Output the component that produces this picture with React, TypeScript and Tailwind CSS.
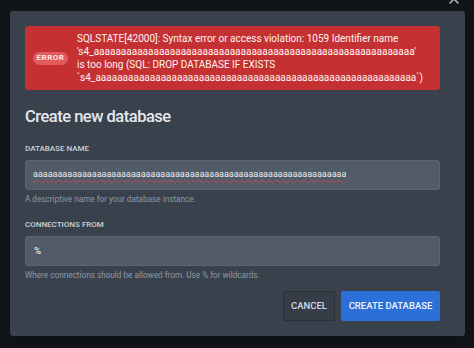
import { X } from "lucide-react";

const A = "a".repeat(64);
const E = "a".repeat(59);

export default function App() {
    return (
        <div className="relative w-full h-[348px] bg-[#111418] pt-[11px] pl-[10px] overflow-hidden" style={{ fontFamily: "Roboto, 'Noto Sans', sans-serif" }}>
            <X size={16} strokeWidth={2.5} className="absolute right-[12px] top-[-9px] text-[#aab2bd]" />

            <div className="w-[455px] h-[325px] bg-[#39414c] rounded-[3px] pt-[15px] pl-[15px] pr-[25px] pb-[15px] flex flex-col shadow-lg">
                {/* error */}
                <div className="h-[64px] bg-[#c53032] rounded-[3px] flex items-center pl-[8px] overflow-hidden">
                    <span className="shrink-0 w-[35px] h-[13px] rounded-full bg-[#e15a5c] text-[#fde8e8] text-[8px] font-bold tracking-[0.06em] flex items-center justify-center">
                        ERROR
                    </span>
                    <p className="ml-[9px] text-[10px] leading-[13px] text-[#fff3f3] whitespace-pre">
                        {"SQLSTATE[42000]: Syntax error or access violation: 1059 Identifier name\n"}
                        {`'s4_${E}'\n`}
                        {"is too long (SQL: DROP DATABASE IF EXISTS\n"}
                        {`\`s4_${E}\`)`}
                    </p>
                </div>

                <h2 className="mt-[16px] text-[16.5px] leading-[22px] font-medium tracking-[-0.03em] text-[#e5e8ec]">Create new database</h2>

                <label className="mt-[15px] text-[8px] leading-[12px] font-medium text-[#cbd2da]">DATABASE NAME</label>
                <div className="mt-[5px] h-[30px] bg-[#525c68] border border-[#5b6672] rounded-[3px] flex items-center pl-[7px]">
                    <span className="text-[9px] text-[#e8ebef] underline decoration-wavy decoration-[#c04a4a] decoration-[0.5px] underline-offset-2">{A}</span>
                </div>
                <p className="mt-[3px] text-[8.2px] leading-[12px] text-[#8f99a5]">A descriptive name for your database instance.</p>

                <label className="mt-[14px] text-[8px] leading-[12px] font-medium text-[#cbd2da]">CONNECTIONS FROM</label>
                <div className="mt-[5px] h-[30px] bg-[#525c68] border border-[#5b6672] rounded-[3px] flex items-center pl-[8px]">
                    <span className="text-[9.5px] font-medium text-[#e8ebef]">%</span>
                </div>
                <p className="mt-[3px] text-[8.2px] leading-[12px] text-[#8f99a5]">Where connections should be allowed from. Use % for wildcards.</p>

                <div className="mt-auto flex justify-end gap-[6px]">
                    <button className="h-[30px] w-[52px] border border-[#2a3038] bg-[#363d47] rounded-[2px] text-[9.5px] font-medium text-[#d5dae0]">
                        CANCEL
                    </button>
                    <button className="h-[30px] w-[99px] bg-[#2c6fd9] rounded-[2px] text-[9.5px] font-medium text-[#eef4fd]">
                        CREATE DATABASE
                    </button>
                </div>
            </div>
        </div>
    );
}
